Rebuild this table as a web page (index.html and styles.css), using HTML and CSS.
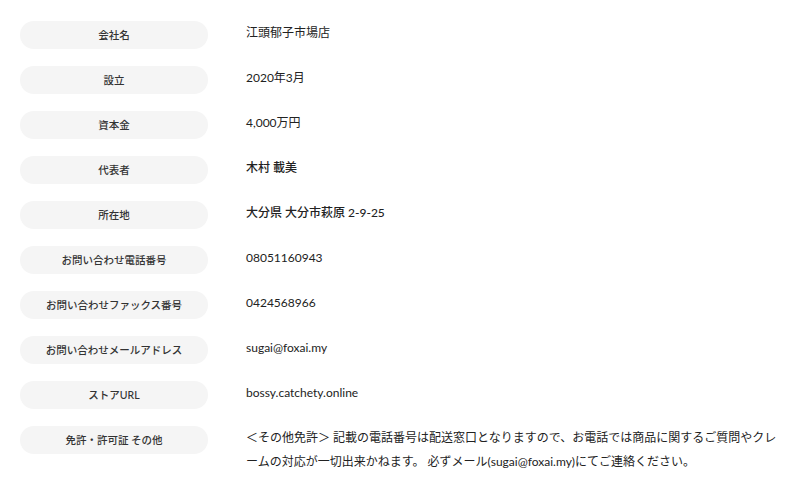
FILE: index.html
```html
<!DOCTYPE html>
<html lang="ja">
<head>
  <meta charset="UTF-8">
  <meta name="viewport" content="width=device-width, initial-scale=1.0">
  <title>会社概要</title>
  <link rel="stylesheet" href="styles.css">
</head>
<body>
  <dl class="company">
    <div class="row">
      <dt>会社名</dt>
      <dd>江頭郁子市場店</dd>
    </div>
    <div class="row">
      <dt>設立</dt>
      <dd>2020年3月</dd>
    </div>
    <div class="row">
      <dt>資本金</dt>
      <dd>4,000万円</dd>
    </div>
    <div class="row">
      <dt>代表者</dt>
      <dd class="strong">木村 載美</dd>
    </div>
    <div class="row">
      <dt>所在地</dt>
      <dd class="strong">大分県 大分市萩原 2-9-25</dd>
    </div>
    <div class="row">
      <dt>お問い合わせ電話番号</dt>
      <dd>08051160943</dd>
    </div>
    <div class="row">
      <dt>お問い合わせファックス番号</dt>
      <dd>0424568966</dd>
    </div>
    <div class="row">
      <dt>お問い合わせメールアドレス</dt>
      <dd>sugai@foxai.my</dd>
    </div>
    <div class="row">
      <dt>ストアURL</dt>
      <dd>bossy.catchety.online</dd>
    </div>
    <div class="row">
      <dt>免許・許可証 その他</dt>
      <dd>＜その他免許＞ 記載の電話番号は配送窓口となりますので、お電話では商品に関するご質問やクレームの対応が一切出来かねます。 必ずメール(sugai@foxai.my)にてご連絡ください。</dd>
    </div>
  </dl>
</body>
</html>
```

FILE: styles.css
```css
* {
  margin: 0;
  padding: 0;
  box-sizing: border-box;
}

body {
  background: #fff;
  color: #222;
  font-family: 'Lato', 'Noto Sans CJK JP', sans-serif;
  padding: 21px 20px;
}

.company {
  display: flex;
  flex-direction: column;
  gap: 17px;
  width: 762px;
}

.row {
  display: flex;
  align-items: flex-start;
  gap: 38px;
}

.row dt {
  flex: 0 0 188px;
  height: 28px;
  line-height: 28px;
  border-radius: 14px;
  background: #f5f5f5;
  text-align: center;
  font-size: 10.5px;
  font-weight: 500;
  color: #333;
}

.row dd {
  flex: 1;
  font-size: 12px;
  line-height: 24px;
  color: #222;
}

.row dd.strong {
  font-weight: 500;
}
```
